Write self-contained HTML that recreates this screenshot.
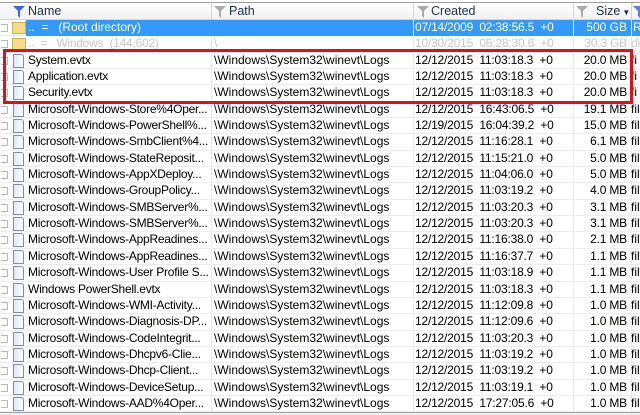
<!DOCTYPE html>
<html><head><meta charset="utf-8"><style>
*{margin:0;padding:0;box-sizing:border-box}
body{width:640px;height:415px;overflow:hidden;background:#fff;font-family:"Liberation Sans",sans-serif;font-size:12px;color:#000;position:relative}
.top{position:absolute;left:0;top:0;width:640px;height:3px;background:#fff;border-bottom:1px solid #a0a0a0}
.hdr{position:absolute;left:0;top:3px;width:640px;height:17px;background:linear-gradient(#fff,#f2f2f2);border-bottom:1px solid #d5d5d5}
.hdr div{position:absolute;top:0;height:17px;line-height:17px;border-right:1px solid #d5d5d5;color:#1e3050;font-size:12.5px}
.rows{position:absolute;left:0;top:20px;width:640px}
.r{height:16.35px;position:relative;border-bottom:1px solid #ececf8;line-height:15px;white-space:pre}
.r span{position:absolute;top:0;overflow:hidden;white-space:pre}
.n{left:28px;width:182px;letter-spacing:-0.25px}.p{left:214px;width:197px}.c{left:415px;width:157px;letter-spacing:-0.2px}.s{left:574px;width:53px;text-align:right;letter-spacing:-0.2px}.t{left:631px;width:10px}
.vl{position:absolute;top:20px;height:393px;width:1px;background:#e6e6f6}
.cb{position:absolute;left:1px;top:4px;width:7px;height:8px;border:1px solid #b8b8cc;border-left:none}
.fi{position:absolute;left:13px;top:1px;width:11px;height:14px;border:1px solid #7d8fb0;background:linear-gradient(90deg,#dfe8f6,#fff);border-radius:0 3px 0 0}
.sel{background:#3399ff;color:#fff}
.gr{color:#c8c8c8}
.fo{position:absolute;left:12px;top:2px;width:14px;height:12px;background:#f3dc8a;border:1px solid #d0b050}
.red{position:absolute;left:3px;top:49px;width:630px;height:55px;border:3px solid #e0101a}
.bot{position:absolute;left:0;top:412px;width:640px;height:3px;background:#f0f0f0;border-top:1px solid #a0a0a0}
</style></head><body>
<div class="top"></div>
<div class="hdr">
<div style="left:0;width:212px;padding-left:28px"><svg style="position:absolute;left:13px;top:3px" width="12" height="12"><path d="M0 0H12L7 5V12L5 10V5Z" fill="#4466dd"/></svg>Name</div>
<div style="left:212px;width:202px;padding-left:17px"><svg style="position:absolute;left:2px;top:3px" width="12" height="12"><path d="M0 0H12L7 5V12L5 10V5Z" fill="#aaa"/></svg>Path</div>
<div style="left:414px;width:160px;padding-left:17px"><svg style="position:absolute;left:3px;top:3px" width="12" height="12"><path d="M0 0H12L7 5V12L5 10V5Z" fill="#aaa"/></svg>Created</div>
<div style="left:574px;width:58px;padding-left:22px"><svg style="position:absolute;left:2px;top:3px" width="12" height="12"><path d="M0 0H12L7 5V12L5 10V5Z" fill="#aaa"/></svg>Size<span style="font-size:8px;margin-left:2px">▼</span></div>
<div style="left:632px;width:10px;border:none"><svg style="position:absolute;left:1px;top:3px" width="12" height="12"><path d="M0 0H12L7 5V12L5 10V5Z" fill="#6677dd"/></svg></div>
</div>
<div class="vl" style="left:211px"></div><div class="vl" style="left:413px"></div><div class="vl" style="left:573px"></div><div class="vl" style="left:631px"></div>
<div class="rows">
<div class="r"><span class="sel" style="left:26px;width:186px;height:16px;padding-left:2px">..  =   (Root directory)</span><span class="sel" style="left:212px;width:201px;height:16px"></span><span class="sel" style="left:414px;width:159px;height:16px;padding-left:1px;letter-spacing:-0.2px">07/14/2009  02:38:56.5  +0</span><span class="sel" style="left:574px;width:57px;height:16px;text-align:right;padding-right:4px">500 GB</span><span class="sel" style="left:632px;width:8px;height:16px;padding-left:1px">Ro</span><div class="cb"></div><div class="fo"></div></div>
<div class="r gr"><span class="n">..  =   Windows  (144,602)</span><span class="p">\</span><span class="c">10/30/2015  06:28:30.6  +0</span><span class="s">30.3 GB</span><span class="t">di</span><div class="cb"></div><div class="fo"></div></div>
<div class="r"><span class="n">System.evtx</span><span class="p">\Windows\System32\winevt\Logs</span><span class="c">12/12/2015  11:03:18.3  +0</span><span class="s">20.0 MB</span><span class="t">fi</span><div class="cb"></div><div class="fi"></div></div>
<div class="r"><span class="n">Application.evtx</span><span class="p">\Windows\System32\winevt\Logs</span><span class="c">12/12/2015  11:03:18.3  +0</span><span class="s">20.0 MB</span><span class="t">fi</span><div class="cb"></div><div class="fi"></div></div>
<div class="r"><span class="n">Security.evtx</span><span class="p">\Windows\System32\winevt\Logs</span><span class="c">12/12/2015  11:03:18.3  +0</span><span class="s">20.0 MB</span><span class="t">fi</span><div class="cb"></div><div class="fi"></div></div>
<div class="r"><span class="n">Microsoft-Windows-Store%4Oper...</span><span class="p">\Windows\System32\winevt\Logs</span><span class="c">12/12/2015  16:43:06.5  +0</span><span class="s">19.1 MB</span><span class="t">fil</span><div class="cb"></div><div class="fi"></div></div>
<div class="r"><span class="n">Microsoft-Windows-PowerShell%...</span><span class="p">\Windows\System32\winevt\Logs</span><span class="c">12/19/2015  16:04:39.2  +0</span><span class="s">15.0 MB</span><span class="t">fil</span><div class="cb"></div><div class="fi"></div></div>
<div class="r"><span class="n">Microsoft-Windows-SmbClient%4...</span><span class="p">\Windows\System32\winevt\Logs</span><span class="c">12/12/2015  11:16:28.1  +0</span><span class="s">6.1 MB</span><span class="t">fil</span><div class="cb"></div><div class="fi"></div></div>
<div class="r"><span class="n">Microsoft-Windows-StateReposit...</span><span class="p">\Windows\System32\winevt\Logs</span><span class="c">12/12/2015  11:15:21.0  +0</span><span class="s">5.0 MB</span><span class="t">fil</span><div class="cb"></div><div class="fi"></div></div>
<div class="r"><span class="n">Microsoft-Windows-AppXDeploy...</span><span class="p">\Windows\System32\winevt\Logs</span><span class="c">12/12/2015  11:04:06.0  +0</span><span class="s">5.0 MB</span><span class="t">fil</span><div class="cb"></div><div class="fi"></div></div>
<div class="r"><span class="n">Microsoft-Windows-GroupPolicy...</span><span class="p">\Windows\System32\winevt\Logs</span><span class="c">12/12/2015  11:03:19.2  +0</span><span class="s">4.0 MB</span><span class="t">fil</span><div class="cb"></div><div class="fi"></div></div>
<div class="r"><span class="n">Microsoft-Windows-SMBServer%...</span><span class="p">\Windows\System32\winevt\Logs</span><span class="c">12/12/2015  11:03:20.3  +0</span><span class="s">3.1 MB</span><span class="t">fil</span><div class="cb"></div><div class="fi"></div></div>
<div class="r"><span class="n">Microsoft-Windows-SMBServer%...</span><span class="p">\Windows\System32\winevt\Logs</span><span class="c">12/12/2015  11:03:20.3  +0</span><span class="s">3.1 MB</span><span class="t">fil</span><div class="cb"></div><div class="fi"></div></div>
<div class="r"><span class="n">Microsoft-Windows-AppReadines...</span><span class="p">\Windows\System32\winevt\Logs</span><span class="c">12/12/2015  11:16:38.0  +0</span><span class="s">2.1 MB</span><span class="t">fil</span><div class="cb"></div><div class="fi"></div></div>
<div class="r"><span class="n">Microsoft-Windows-AppReadines...</span><span class="p">\Windows\System32\winevt\Logs</span><span class="c">12/12/2015  11:16:37.7  +0</span><span class="s">1.1 MB</span><span class="t">fil</span><div class="cb"></div><div class="fi"></div></div>
<div class="r"><span class="n">Microsoft-Windows-User Profile S...</span><span class="p">\Windows\System32\winevt\Logs</span><span class="c">12/12/2015  11:03:18.9  +0</span><span class="s">1.1 MB</span><span class="t">fil</span><div class="cb"></div><div class="fi"></div></div>
<div class="r"><span class="n">Windows PowerShell.evtx</span><span class="p">\Windows\System32\winevt\Logs</span><span class="c">12/12/2015  11:03:18.3  +0</span><span class="s">1.1 MB</span><span class="t">fil</span><div class="cb"></div><div class="fi"></div></div>
<div class="r"><span class="n">Microsoft-Windows-WMI-Activity...</span><span class="p">\Windows\System32\winevt\Logs</span><span class="c">12/12/2015  11:12:09.8  +0</span><span class="s">1.0 MB</span><span class="t">fil</span><div class="cb"></div><div class="fi"></div></div>
<div class="r"><span class="n">Microsoft-Windows-Diagnosis-DP...</span><span class="p">\Windows\System32\winevt\Logs</span><span class="c">12/12/2015  11:12:09.6  +0</span><span class="s">1.0 MB</span><span class="t">fil</span><div class="cb"></div><div class="fi"></div></div>
<div class="r"><span class="n">Microsoft-Windows-CodeIntegrit...</span><span class="p">\Windows\System32\winevt\Logs</span><span class="c">12/12/2015  11:03:20.3  +0</span><span class="s">1.0 MB</span><span class="t">fil</span><div class="cb"></div><div class="fi"></div></div>
<div class="r"><span class="n">Microsoft-Windows-Dhcpv6-Clie...</span><span class="p">\Windows\System32\winevt\Logs</span><span class="c">12/12/2015  11:03:19.2  +0</span><span class="s">1.0 MB</span><span class="t">fil</span><div class="cb"></div><div class="fi"></div></div>
<div class="r"><span class="n">Microsoft-Windows-Dhcp-Client...</span><span class="p">\Windows\System32\winevt\Logs</span><span class="c">12/12/2015  11:03:19.2  +0</span><span class="s">1.0 MB</span><span class="t">fil</span><div class="cb"></div><div class="fi"></div></div>
<div class="r"><span class="n">Microsoft-Windows-DeviceSetup...</span><span class="p">\Windows\System32\winevt\Logs</span><span class="c">12/12/2015  11:03:19.1  +0</span><span class="s">1.0 MB</span><span class="t">fil</span><div class="cb"></div><div class="fi"></div></div>
<div class="r"><span class="n">Microsoft-Windows-AAD%4Oper...</span><span class="p">\Windows\System32\winevt\Logs</span><span class="c">12/12/2015  17:27:05.6  +0</span><span class="s">1.0 MB</span><span class="t">fil</span><div class="cb"></div><div class="fi"></div></div>
</div>
<div class="red"></div>
<div class="bot"></div>
</body></html>
